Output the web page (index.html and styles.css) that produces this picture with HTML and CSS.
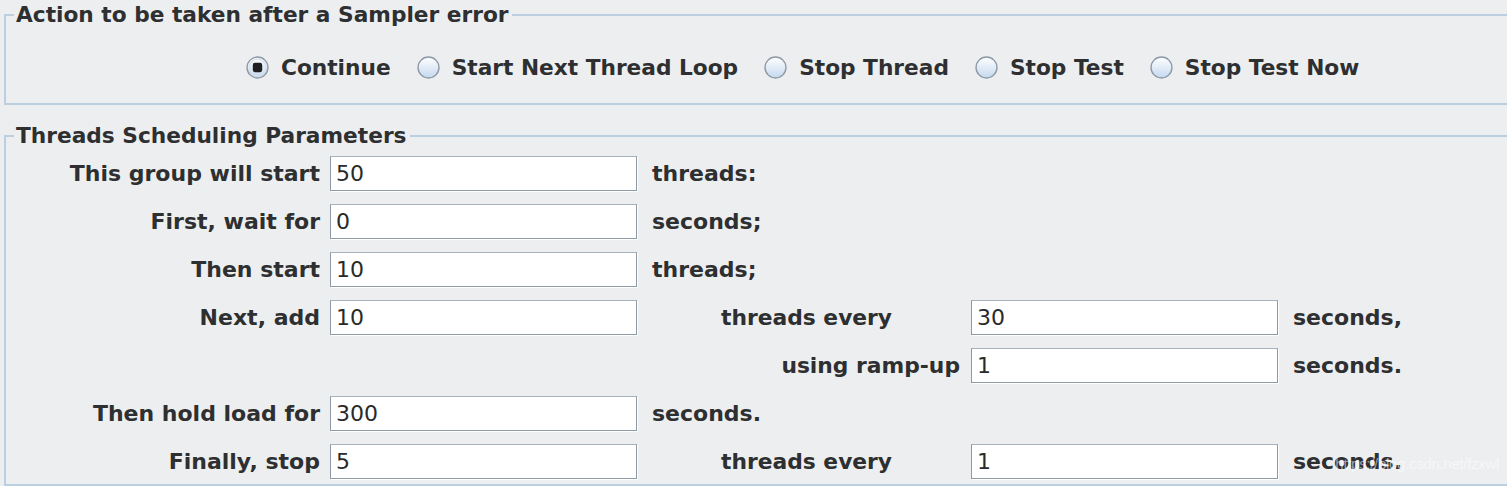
FILE: index.html
```html
<!DOCTYPE html>
<html>
<head>
<meta charset="utf-8">
<link rel="stylesheet" href="styles.css">
</head>
<body>
<div class="page">
  <fieldset class="panel panel-action">
    <legend class="legend">Action to be taken after a Sampler error</legend>
    <div class="radios">
      <label class="radio"><svg class="rb" viewBox="0 0 22 22"><defs><linearGradient id="g1" x1="0" y1="0" x2="0" y2="1"><stop offset="0" stop-color="#ffffff"/><stop offset="1" stop-color="#c4d8ee"/></linearGradient></defs><circle cx="11" cy="11" r="10" fill="url(#g1)" stroke="#8c9aa6" stroke-width="1.3"/><circle cx="11" cy="11" r="8" fill="none" stroke="#d6dde4" stroke-width="1"/><rect x="6.5" y="6.5" width="9" height="9" rx="2" fill="#1f1f1f"/></svg><span>Continue</span></label>
      <label class="radio"><svg class="rb" viewBox="0 0 22 22"><circle cx="11" cy="11" r="10" fill="url(#g1)" stroke="#8c9aa6" stroke-width="1.3"/></svg><span>Start Next Thread Loop</span></label>
      <label class="radio"><svg class="rb" viewBox="0 0 22 22"><circle cx="11" cy="11" r="10" fill="url(#g1)" stroke="#8c9aa6" stroke-width="1.3"/></svg><span>Stop Thread</span></label>
      <label class="radio"><svg class="rb" viewBox="0 0 22 22"><circle cx="11" cy="11" r="10" fill="url(#g1)" stroke="#8c9aa6" stroke-width="1.3"/></svg><span>Stop Test</span></label>
      <label class="radio"><svg class="rb" viewBox="0 0 22 22"><circle cx="11" cy="11" r="10" fill="url(#g1)" stroke="#8c9aa6" stroke-width="1.3"/></svg><span>Stop Test Now</span></label>
    </div>
  </fieldset>

  <fieldset class="panel panel-sched">
    <legend class="legend">Threads Scheduling Parameters</legend>
    <div class="grid">
      <div class="lbl">This group will start</div>
      <div class="field">50</div>
      <div class="unit">threads:</div>
      <div class="blank"></div><div class="blank"></div><div class="blank"></div>

      <div class="lbl">First, wait for</div>
      <div class="field">0</div>
      <div class="unit">seconds;</div>
      <div class="blank"></div><div class="blank"></div><div class="blank"></div>

      <div class="lbl">Then start</div>
      <div class="field">10</div>
      <div class="unit">threads;</div>
      <div class="blank"></div><div class="blank"></div><div class="blank"></div>

      <div class="lbl">Next, add</div>
      <div class="field">10</div>
      <div class="blank"></div>
      <div class="mid">threads every</div>
      <div class="field">30</div>
      <div class="unit">seconds,</div>

      <div class="blank"></div><div class="blank"></div><div class="blank"></div>
      <div class="mid mid-right">using ramp-up</div>
      <div class="field">1</div>
      <div class="unit">seconds.</div>

      <div class="lbl">Then hold load for</div>
      <div class="field">300</div>
      <div class="unit">seconds.</div>
      <div class="blank"></div><div class="blank"></div><div class="blank"></div>

      <div class="lbl">Finally, stop</div>
      <div class="field">5</div>
      <div class="blank"></div>
      <div class="mid">threads every</div>
      <div class="field">1</div>
      <div class="unit">seconds.</div>
    </div>
    <div class="watermark">https://blog.csdn.net/fzxwl</div>
  </fieldset>
</div>
</body>
</html>
```

FILE: styles.css
```css
html, body {
  margin: 0;
  padding: 0;
  background: #edeef0;
}
body {
  width: 1507px;
  height: 486px;
  overflow: hidden;
  font-family: "DejaVu Sans", "Liberation Sans", sans-serif;
  color: #2e2f31;
}
.page {
  padding-left: 4px;
}
.panel {
  margin: 0;
  border: 2px solid #bccfe1;
  border-right: none;
  padding: 0;
  min-width: 0;
  position: relative;
}
.legend {
  margin-left: 8px;
  padding: 0 3px 0 2px;
  font-weight: bold;
  font-size: 21.7px;
  line-height: 30px;
}
.panel-action {
  margin-top: 0;
  height: 105px;
  box-sizing: border-box;
}
.radios {
  display: flex;
  align-items: center;
  padding-left: 240px;
  margin-top: 25px;
  gap: 26px;
}
.radio {
  display: flex;
  align-items: center;
  gap: 12px;
  font-weight: bold;
  font-size: 21.7px;
}
.rb {
  width: 23px;
  height: 23px;
  display: block;
}
.panel-sched {
  margin-top: 16px;
  height: 365px;
  box-sizing: border-box;
}
.grid {
  display: grid;
  grid-template-columns: 324px 307px 84px 250px 307px 1fr;
  grid-auto-rows: 35px;
  row-gap: 13px;
  margin-top: 5px;
  align-items: center;
}
.lbl {
  text-align: right;
  padding-right: 10px;
  font-weight: bold;
  font-size: 22px;
}
.field {
  height: 35px;
  box-sizing: border-box;
  background: #fff;
  border: 1px solid #8d99a5;
  border-top-color: #a9b3bd;
  box-shadow: 1px 1px 0 #ffffff;
  font-size: 22px;
  line-height: 33px;
  padding-left: 5px;
  color: #2a2a2a;
}
.unit {
  padding-left: 15px;
  font-weight: bold;
  font-size: 22px;
}
.mid {
  font-weight: bold;
  font-size: 21.8px;
}
.mid-right {
  text-align: right;
  padding-right: 11px;
}
.watermark {
  position: absolute;
  right: 8px;
  bottom: 12px;
  font-family: "Liberation Sans", sans-serif;
  font-size: 15px;
  color: rgba(255, 255, 255, 0.55);
  letter-spacing: -0.3px;
}
```
